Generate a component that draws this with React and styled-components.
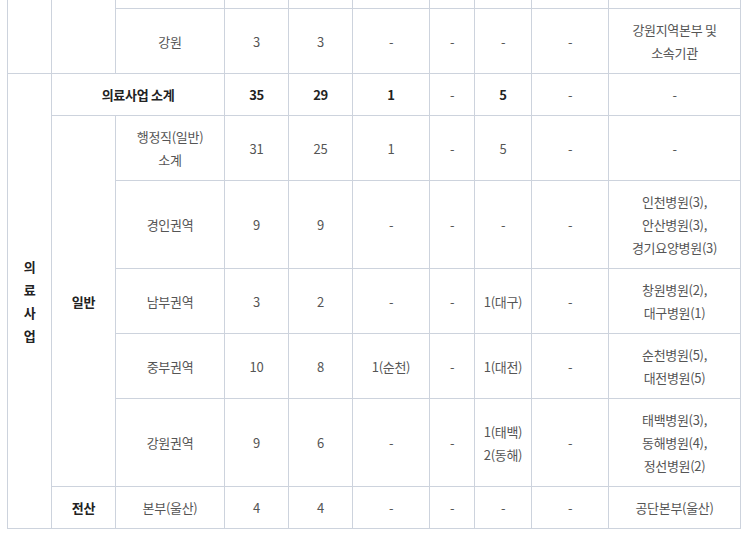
import React from "react";
import styled, { createGlobalStyle } from "styled-components";

const Global = createGlobalStyle`
  html, body { margin: 0; padding: 0; background: #fff; }
  body { font-family: "Noto Sans CJK KR", "Noto Sans", sans-serif; }
`;

const Page = styled.div`
  height: 535px;
  overflow: hidden;
  padding-left: 7px;
  background: #fff;
`;

const Table = styled.table`
  width: 733px;
  table-layout: fixed;
  border-collapse: collapse;
  margin-top: -1px;
  font-size: 13px;
  line-height: 23px;
  color: #555;
`;

const Cell = styled.td`
  border: 1px solid #cdd3dd;
  padding: 9px 2px;
  text-align: center;
  vertical-align: middle;
  font-weight: ${(p) => (p.$strong ? 700 : 400)};
  color: ${(p) => (p.$strong ? "#222" : "#555")};
  letter-spacing: -0.3px;
`;

const SpacerCell = styled.td`
  border: 1px solid #cdd3dd;
  padding: 0;
  height: 8px;
`;

const VerticalLabel = styled.span`
  display: inline-block;
  width: 1em;
  word-break: break-all;
  white-space: normal;
`;

const widths = [44, 64, 109, 64, 64, 77, 45, 57, 77, 132];

const Lines = ({ items }) =>
  items.map((t, i) => (
    <React.Fragment key={i}>
      {i > 0 && <br />}
      {t}
    </React.Fragment>
  ));

const general = [
  { name: ["행정직(일반)", "소계"], v: ["31", "25", "1", "-", "5", "-"], note: ["-"] },
  { name: ["경인권역"], v: ["9", "9", "-", "-", "-", "-"], note: ["인천병원(3),", "안산병원(3),", "경기요양병원(3)"] },
  { name: ["남부권역"], v: ["3", "2", "-", "-", "1(대구)", "-"], note: ["창원병원(2),", "대구병원(1)"] },
  { name: ["중부권역"], v: ["10", "8", "1(순천)", "-", "1(대전)", "-"], note: ["순천병원(5),", "대전병원(5)"] },
  { name: ["강원권역"], v: ["9", "6", "-", "-", ["1(태백)", "2(동해)"], "-"], note: ["태백병원(3),", "동해병원(4),", "정선병원(2)"] },
];

const ValueCells = ({ values, strong }) =>
  values.map((v, i) => (
    <Cell key={i} $strong={strong && v !== "-"}>
      {Array.isArray(v) ? <Lines items={v} /> : v}
    </Cell>
  ));

export default function App() {
  return (
    <Page>
      <Global />
      <Table>
        <colgroup>
          {widths.map((w, i) => (
            <col key={i} style={{ width: w }} />
          ))}
        </colgroup>
        <tbody>
          <tr>
            <Cell rowSpan={2} />
            <Cell rowSpan={2} />
            {widths.slice(2).map((_, i) => (
              <SpacerCell key={i} />
            ))}
          </tr>
          <tr>
            <Cell>강원</Cell>
            <ValueCells values={["3", "3", "-", "-", "-", "-"]} />
            <Cell>
              <Lines items={["강원지역본부 및", "소속기관"]} />
            </Cell>
          </tr>
          <tr>
            <Cell $strong rowSpan={7}>
              <VerticalLabel>의료사업</VerticalLabel>
            </Cell>
            <Cell $strong colSpan={2}>
              의료사업 소계
            </Cell>
            <ValueCells values={["35", "29", "1", "-", "5", "-"]} strong />
            <Cell>-</Cell>
          </tr>
          {general.map((row, idx) => (
            <tr key={idx}>
              {idx === 0 && (
                <Cell $strong rowSpan={general.length}>
                  일반
                </Cell>
              )}
              <Cell>
                <Lines items={row.name} />
              </Cell>
              <ValueCells values={row.v} />
              <Cell>
                <Lines items={row.note} />
              </Cell>
            </tr>
          ))}
          <tr>
            <Cell $strong>전산</Cell>
            <Cell>본부(울산)</Cell>
            <ValueCells values={["4", "4", "-", "-", "-", "-"]} />
            <Cell>공단본부(울산)</Cell>
          </tr>
        </tbody>
      </Table>
    </Page>
  );
}
